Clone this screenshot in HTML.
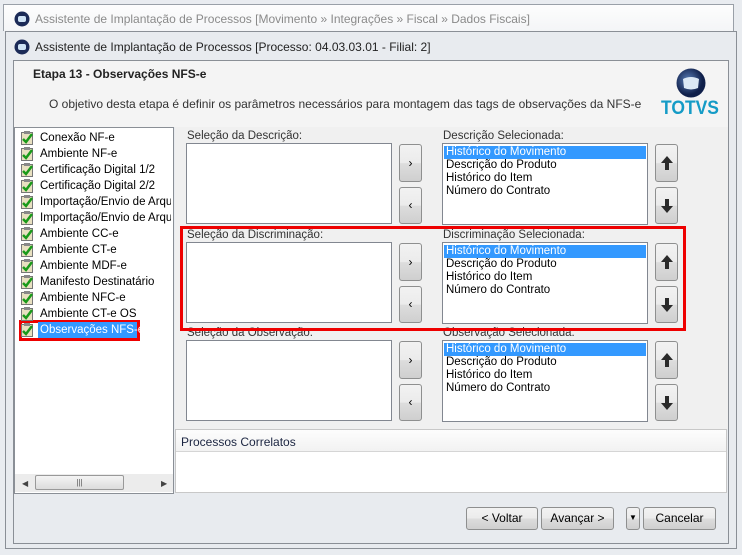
<!DOCTYPE html>
<html><head><meta charset="utf-8"><style>
*{box-sizing:border-box;margin:0;padding:0}
body{width:742px;height:555px;background:#e9ecf0;font-family:"Liberation Sans",sans-serif;font-size:11px;color:#000;position:relative;overflow:hidden}
.a{position:absolute}
.t{font-family:"Liberation Sans",sans-serif;font-size:12px;white-space:nowrap}
.box{position:absolute;background:#fff;border:1px solid #828790}
.btn{position:absolute;border:1px solid #8e8f8f;border-radius:3px;background:linear-gradient(#f2f2f2 0%,#ebebeb 50%,#dddddd 51%,#cfcfcf 100%);text-align:center;font-family:"Liberation Sans",sans-serif;font-size:12px;color:#000}
.sel{background:#3399ff;color:#fff}
.li{height:13px;line-height:13px;padding-left:2px;font-family:"Liberation Sans",sans-serif;font-size:11.5px;white-space:nowrap}
.ico{position:absolute;width:12px;height:14px}
.tr{position:absolute;left:21px;font-family:"Liberation Sans",sans-serif;font-size:11.5px;white-space:nowrap;height:16px;line-height:16px}
.tr span{margin-left:19px}
.lbl{position:absolute;font-family:"Liberation Sans",sans-serif;font-size:11.5px;color:#333;white-space:nowrap}
.btn svg{position:absolute;left:4px;top:10px}
</style></head><body>
<div class="a" style="left:3px;top:4px;width:731px;height:27px;border:1px solid #9aa0a8;border-bottom:none;background:linear-gradient(#fdfdfd,#f4f5f7)"></div>
<svg class="a" style="left:14px;top:11px" width="16" height="16"><circle cx="8" cy="8" r="7.5" fill="#1b2a57"/><rect x="4" y="5" width="8" height="6" rx="2" fill="#cfe3f5"/></svg>
<div class="a t" style="left:35px;top:12px;color:#8a8a8a">Assistente de Implantação de Processos [Movimento » Integrações » Fiscal » Dados Fiscais]</div>
<div class="a" style="left:5px;top:31px;width:732px;height:518px;border:1px solid #8a8f96;background:#e8ebef"></div>
<svg class="a" style="left:14px;top:39px" width="16" height="16"><circle cx="8" cy="8" r="7.5" fill="#1b2a57"/><rect x="4" y="5" width="8" height="6" rx="2" fill="#cfe3f5"/></svg>
<div class="a t" style="left:35px;top:40px;color:#222">Assistente de Implantação de Processos [Processo: 04.03.03.01 - Filial: 2]</div>
<div class="a" style="left:13px;top:60px;width:716px;height:484px;border:1px solid #8a8f96;background:#e8ebef"></div>
<div class="a" style="left:14px;top:61px;width:714px;height:66px;background:#f4f4f4"></div>
<div class="a t" style="left:33px;top:67px;font-weight:bold;font-size:12px;color:#222">Etapa 13 - Observações NFS-e</div>
<div class="a t" style="left:49px;top:97px;color:#333">O objetivo desta etapa é definir os parâmetros necessários para montagem das tags de observações da NFS-e</div>
<svg class="a" style="left:675px;top:68px" width="32" height="30"><defs><radialGradient id="g" cx="0.4" cy="0.4"><stop offset="0" stop-color="#5a7fb8"/><stop offset="1" stop-color="#0f1f4a"/></radialGradient></defs><circle cx="16" cy="15" r="14.5" fill="url(#g)"/><path d="M8 11 Q16 7 24 11 L23 20 Q16 23 9 20Z" fill="#dbe8f5"/></svg>
<div class="a" style="left:661px;top:98px;font-family:'Liberation Sans',sans-serif;font-weight:bold;font-size:19px;color:#149bc6;transform:scaleX(0.92);transform-origin:left">TOTVS</div>
<div class="a" style="left:14px;top:127px;width:160px;height:367px;background:#fff;border:1px solid #8a8f96"></div>
<div class="a" style="left:19px;top:320px;width:121px;height:21px;border:3px solid #e00"></div>
<div class="a sel" style="left:38px;top:322px;width:99px;height:16px"></div>
<div id="tree"></div>
<div class="a" style="left:15px;top:474px;width:158px;height:18px;background:#ececec"></div>
<div class="a" style="left:22px;top:479px;font-size:8px;color:#444">◀</div>
<div class="a" style="left:161px;top:479px;font-size:8px;color:#444">▶</div>
<div class="a" style="left:35px;top:475px;width:89px;height:15px;border:1px solid #999;border-radius:2px;background:linear-gradient(#f4f4f4,#dcdcdc);font-size:8px;text-align:center;line-height:13px;color:#555">|||</div>
<div class="a" style="left:175px;top:127px;width:553px;height:302px;background:#f0f0f0"></div>
<div class="a" style="left:175px;top:429px;width:552px;height:64px;background:#fff;border:1px solid #c8c8c8"></div>
<div class="a" style="left:176px;top:430px;width:550px;height:22px;background:linear-gradient(#fdfdfd,#f2f2f2);border-bottom:1px solid #d5d5d5"></div>
<div class="a t" style="left:181px;top:435px;color:#1a2440">Processos Correlatos</div>
<div id="secs"></div>
<div class="a" style="left:180px;top:226px;width:506px;height:105px;border:3px solid #e00"></div>
<div class="btn" style="left:466px;top:507px;width:72px;height:23px;line-height:21px">&lt; Voltar</div>
<div class="btn" style="left:541px;top:507px;width:73px;height:23px;line-height:21px">Avançar &gt;</div>
<div class="btn" style="left:626px;top:507px;width:14px;height:23px;line-height:19px;font-size:8px">▼</div>
<div class="btn" style="left:643px;top:507px;width:73px;height:23px;line-height:21px">Cancelar</div>
<script>
var items=["Conexão NF-e","Ambiente NF-e","Certificação Digital 1/2","Certificação Digital 2/2","Importação/Envio de Arquivo","Importação/Envio de Arquivo","Ambiente CC-e","Ambiente CT-e","Ambiente MDF-e","Manifesto Destinatário","Ambiente NFC-e","Ambiente CT-e OS","Observações NFS-e"];
var h="";
items.forEach(function(s,i){var y=130+i*16;
h+='<svg class="ico" style="left:21px;top:'+(y+1)+'px" viewBox="0 0 12 14"><rect x="0.5" y="1.5" width="11" height="12" fill="#e8e0c0" stroke="#777"/><rect x="3" y="0" width="6" height="3" fill="#888"/><path d="M2 8 L5 11 L11 3" stroke="#1a9a1a" stroke-width="2.5" fill="none"/></svg>';
h+='<div class="tr" style="top:'+y+'px;width:150px;overflow:hidden;'+(i==12?'color:#fff':'')+'"><span>'+s+'</span></div>';});
document.getElementById("tree").innerHTML=h;
var L=[["Seleção da Descrição:","Descrição Selecionada:"],["Seleção da Discriminação:","Discriminação Selecionada:"],["Seleção da Observação:","Observação Selecionada:"]];
var up='<svg width="14" height="16" viewBox="0 0 14 16"><path d="M7 1 L13 8 L9 8 L9 15 L5 15 L5 8 L1 8Z" fill="#2a2a2a"/></svg>';
var dn='<svg width="14" height="16" viewBox="0 0 14 16"><path d="M7 15 L13 8 L9 8 L9 1 L5 1 L5 8 L1 8Z" fill="#2a2a2a"/></svg>';
var s="";
L.forEach(function(p,i){var o=Math.round(i*98.5);
s+='<div class="lbl" style="left:187px;top:'+(130+o)+'px">'+p[0]+'</div>';
s+='<div class="lbl" style="left:443px;top:'+(130+o)+'px">'+p[1]+'</div>';
s+='<div class="box" style="left:186px;top:'+(143+o)+'px;width:206px;height:81px"></div>';
s+='<div class="btn" style="left:399px;top:'+(144+o)+'px;width:23px;height:38px;line-height:36px">›</div>';
s+='<div class="btn" style="left:399px;top:'+(187+o)+'px;width:23px;height:37px;line-height:35px">‹</div>';
s+='<div class="box" style="left:442px;top:'+(143+o)+'px;width:206px;height:82px;padding:2px 1px"><div class="li sel" style="width:202px">Histórico do Movimento</div><div class="li">Descrição do Produto</div><div class="li">Histórico do Item</div><div class="li">Número do Contrato</div></div>';
s+='<div class="btn" style="left:655px;top:'+(144+o)+'px;width:23px;height:38px">'+up+'</div>';
s+='<div class="btn" style="left:655px;top:'+(187+o)+'px;width:23px;height:37px">'+dn+'</div>';});
document.getElementById("secs").innerHTML=s;
</script>
</body></html>
